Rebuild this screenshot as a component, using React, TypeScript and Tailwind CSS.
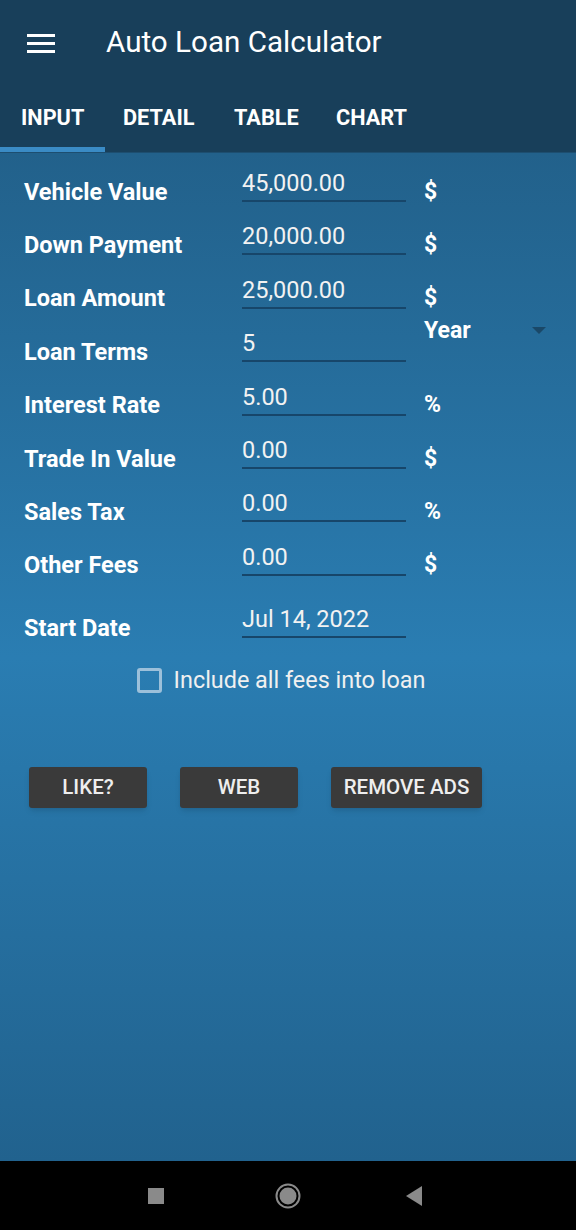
import { ReactNode } from "react";

type Field = { label: string; value: string; unit?: string };

const fields: Field[] = [
  { label: "Vehicle Value", value: "45,000.00", unit: "$" },
  { label: "Down Payment", value: "20,000.00", unit: "$" },
  { label: "Loan Amount", value: "25,000.00", unit: "$" },
  { label: "Loan Terms", value: "5" },
  { label: "Interest Rate", value: "5.00", unit: "%" },
  { label: "Trade In Value", value: "0.00", unit: "$" },
  { label: "Sales Tax", value: "0.00", unit: "%" },
  { label: "Other Fees", value: "0.00", unit: "$" },
];

function Row({ label, value, side }: { label: string; value: string; side?: ReactNode }) {
  return (
    <div className="flex h-[53.4px] items-center pl-6">
      <div className="w-[218px] text-[23.5px] font-bold text-white leading-[26px]">{label}</div>
      <div className="w-[164px] self-start mt-[5px]">
        <div className="text-[23.5px] leading-[26px] text-[#f2f2f2]">{value}</div>
        <div className="mt-[4px] h-[2px] bg-[#17466a]" />
      </div>
      {side}
    </div>
  );
}

function Unit({ u }: { u: string }) {
  return <div className="ml-[18px] text-[23px] font-bold text-white leading-[26px]">{u}</div>;
}

export default function App() {
  return (
    <div
      className="w-[576px] h-[1230px] flex flex-col overflow-hidden"
      style={{ fontFamily: "Roboto, 'Noto Sans', sans-serif" }}
    >
      <div className="bg-[#183f5a]">
        <div className="h-[85px] flex items-center">
          <svg className="ml-[27px] mr-[51px]" width="28" height="22" viewBox="0 0 28 22">
            <rect x="0" y="2" width="28" height="3" fill="#fff" />
            <rect x="0" y="10" width="28" height="3" fill="#fff" />
            <rect x="0" y="18" width="28" height="3" fill="#fff" />
          </svg>
          <div className="text-[29.6px] text-white">Auto Loan Calculator</div>
        </div>
        <div className="h-[62px] pt-[4px] flex items-center text-[21.7px] font-bold text-white">
          <div className="w-[123px] pl-[21px]">INPUT</div>
          <div className="w-[111px]">DETAIL</div>
          <div className="w-[102px]">TABLE</div>
          <div>CHART</div>
        </div>
        <div className="h-[5px] w-[105px] bg-[#3a8bc5]" />
      </div>
      <div className="h-[1px] bg-[#1d4e70]" />
      <div className="flex-1 flex flex-col bg-gradient-to-b from-[#22618b] via-[#2a7db2] to-[#21628e] pt-[12px]">
        {fields.map((f) => (
          <Row
            key={f.label}
            label={f.label}
            value={f.value}
            side={
              f.unit ? (
                <Unit u={f.unit} />
              ) : (
                <div className="self-start mt-[-7px] ml-[18px] flex w-[122px] items-center justify-between">
                  <span className="text-[23px] font-bold text-white leading-[26px]">Year</span>
                  <svg width="14" height="8" viewBox="0 0 14 8">
                    <path d="M0 0 L14 0 L7 7 Z" fill="#1a4868" />
                  </svg>
                </div>
              )
            }
          />
        ))}
        <div className="mt-[9px]">
          <Row label="Start Date" value="Jul 14, 2022" />
        </div>
        <div className="mt-[8px] flex items-center justify-center pr-[14px] gap-[12px]">
          <div className="w-[25px] h-[25px] rounded-[3px] border-[3px] border-[#9cc0da]" />
          <span className="text-[23.4px] text-[#f0f0f0]">Include all fees into loan</span>
        </div>
        <div className="mt-[69px] flex gap-[33px] pl-[29px]">
          {["LIKE?", "WEB", "REMOVE ADS"].map((b) => (
            <div
              key={b}
              className={`h-[41px] ${b === "REMOVE ADS" ? "w-[151px]" : "w-[118px]"} rounded-[3px] bg-[#3a3a3a] shadow-md flex items-center justify-center text-[20.5px] font-medium text-[#eeeeee]`}
            >
              {b}
            </div>
          ))}
        </div>
      </div>
      <div className="h-[69px] bg-black flex items-center">
        <div className="ml-[148px] w-[16px] h-[16px] bg-[#8a8a8a]" />
        <svg className="ml-[111px]" width="26" height="26" viewBox="0 0 26 26">
          <circle cx="13" cy="13" r="11.5" fill="none" stroke="#8a8a8a" strokeWidth="2" />
          <circle cx="13" cy="13" r="8.5" fill="#8a8a8a" />
        </svg>
        <svg className="ml-[105px]" width="18" height="20" viewBox="0 0 18 20">
          <path d="M0 10 L16 0 L16 20 Z" fill="#8a8a8a" />
        </svg>
      </div>
    </div>
  );
}
